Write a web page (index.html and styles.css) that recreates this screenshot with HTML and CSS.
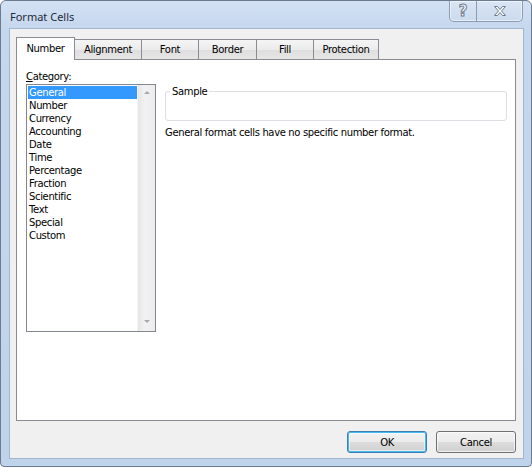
FILE: index.html
```html
<!DOCTYPE html>
<html lang="en">
<head>
    <meta charset="UTF-8">
    <title>Format Cells</title>
    <link rel="stylesheet" href="styles.css">
</head>
<body>
    <div class="window">
        <div class="titlebar">
            <span class="title">Format Cells</span>
            <div class="caption-buttons">
                <span class="cap-btn help">?</span>
                <span class="cap-btn close">
                    <svg width="14" height="12" viewBox="0 0 14 12">
                        <path d="M1.5 1.5h3l2.5 3 2.5-3h3l-4 4.5 4 4.5h-3l-2.5-3-2.5 3h-3l4-4.5z" fill="#fbfcfe" stroke="#6f7d91" stroke-width="1" stroke-linejoin="round"/>
                    </svg>
                </span>
            </div>
        </div>

        <div class="client">
            <!-- Tabs -->
            <div class="tabs">
                <span class="tab active">Number</span>
                <span class="tab">Alignment</span>
                <span class="tab">Font</span>
                <span class="tab">Border</span>
                <span class="tab">Fill</span>
                <span class="tab">Protection</span>
            </div>

            <!-- Number page -->
            <div class="panel">
                <div class="category">
                    <div class="label"><u>C</u>ategory:</div>
                    <div class="listbox">
                        <ul class="items">
                            <li class="selected">General</li>
                            <li>Number</li>
                            <li>Currency</li>
                            <li>Accounting</li>
                            <li>Date</li>
                            <li>Time</li>
                            <li>Percentage</li>
                            <li>Fraction</li>
                            <li>Scientific</li>
                            <li>Text</li>
                            <li>Special</li>
                            <li>Custom</li>
                        </ul>
                        <div class="scrollbar">
                            <span class="arrow up"></span>
                            <span class="arrow down"></span>
                        </div>
                    </div>
                </div>
                <div class="details">
                    <fieldset class="sample">
                        <legend>Sample</legend>
                        <div class="sample-value"></div>
                    </fieldset>
                    <p class="description">General format cells have no specific number format.</p>
                </div>
            </div>

            <!-- Buttons -->
            <div class="footer">
                <button class="btn default">OK</button>
                <button class="btn">Cancel</button>
            </div>
        </div>
    </div>
</body>
</html>
```

FILE: styles.css
```css
body {
    margin: 0;
    width: 532px;
    height: 467px;
    background-color: #fff;
    font-family: "DejaVu Sans", Tahoma, sans-serif;
    font-size: 10px;
    letter-spacing: -0.35px;
    color: #000;
}
.window {
    box-sizing: border-box;
    width: 532px;
    height: 467px;
    border: 1px solid #6b7b90;
    border-radius: 6px 6px 4px 4px;
    background: linear-gradient(180deg, #d3e1f3 0, #c5d7ee 28px, #bfd3eb 100%);
    padding: 0 7px 7px 8px;
    display: flex;
    flex-direction: column;
}
.titlebar {
    height: 27px;
    display: flex;
    justify-content: space-between;
    align-items: flex-start;
}
.title {
    font-family: "Noto Sans", sans-serif;
    font-size: 11px;
    letter-spacing: 0;
    line-height: 16px;
    margin-top: 8px;
    margin-left: 1px;
    color: #1e2a3a;
}
.caption-buttons {
    display: flex;
    margin-right: 1px;
    border: 1px solid #8a9bb2;
    border-top: none;
    border-radius: 0 0 5px 5px;
    box-shadow: inset 0 0 0 1px rgba(255, 255, 255, 0.55);
    background: linear-gradient(180deg, #d9e5f4, #cbdaee);
}
.cap-btn {
    height: 20px;
    display: flex;
    align-items: center;
    justify-content: center;
}
.help {
    width: 26px;
    border-right: 1px solid #8a9bb2;
    font-family: "DejaVu Sans", sans-serif;
    font-size: 15px;
    font-weight: bold;
    letter-spacing: 0;
    color: #fbfcfe;
    -webkit-text-stroke: 1px #6f7d91;
}
.close {
    width: 45px;
}
.client {
    flex: 1;
    background-color: #f0f0f0;
    border: 1px solid #a3b6cf;
    padding: 8px 7px 0 6px;
    display: flex;
    flex-direction: column;
}
.tabs {
    display: flex;
    align-items: flex-end;
    height: 22px;
    padding-left: 1px;
}
.tab {
    box-sizing: border-box;
    height: 20px;
    line-height: 19px;
    padding: 0 8px;
    border: 1px solid #898c95;
    border-bottom: none;
    margin-right: -1px;
    background: linear-gradient(180deg, #f5f5f5 0, #ebebeb 50%, #dedede 51%, #e6e6e6 100%);
    text-align: center;
}
.tab:nth-child(2) { width: 68px; }
.tab:nth-child(3) { width: 58px; }
.tab:nth-child(4) { width: 59px; }
.tab:nth-child(5) { width: 58px; }
.tab:nth-child(6) { width: 66px; }
.tab.active {
    width: 59px;
    height: 23px;
    line-height: 21px;
    margin-left: -1px;
    margin-bottom: -1px;
    background: #fff;
    position: relative;
    z-index: 1;
}
.panel {
    box-sizing: border-box;
    height: 362px;
    background-color: #fff;
    border: 1px solid #898c95;
    padding: 8px 8px 0 9px;
    display: flex;
    gap: 9px;
}
.category {
    width: 130px;
}
.label {
    line-height: 13px;
    margin-top: 2px;
    height: 14px;
}
.listbox {
    box-sizing: border-box;
    height: 248px;
    border: 1px solid #828790;
    display: flex;
}
.items {
    flex: 1;
    list-style: none;
    margin: 0;
    padding: 1px 0 0 1px;
}
.items li {
    height: 13px;
    line-height: 13px;
    padding-left: 1px;
}
.items li.selected {
    background-color: #3399ff;
    color: #fff;
}
.scrollbar {
    width: 17px;
    background: linear-gradient(90deg, #e6e6e6, #f2f2f2 40%, #ececec);
    border-left: 1px solid #f4f4f4;
    display: flex;
    flex-direction: column;
    justify-content: space-between;
    align-items: center;
    padding: 6px 0 8px;
}
.arrow {
    width: 0;
    height: 0;
    border-left: 3px solid transparent;
    border-right: 3px solid transparent;
}
.arrow.up {
    border-bottom: 3px solid #a8a8a8;
}
.arrow.down {
    border-top: 3px solid #a8a8a8;
}
.details {
    flex: 1;
}
.sample {
    margin: 17px 0 0 0;
    padding: 0 0 0 4px;
    width: 342px;
    box-sizing: border-box;
    border: 1px solid #dcdfe3;
    border-radius: 3px;
}
.sample legend {
    padding: 0 2px;
    line-height: 13px;
}
.sample-value {
    height: 22px;
}
.description {
    margin: 5px 0 0;
    line-height: 13px;
}
.footer {
    display: flex;
    justify-content: flex-end;
    gap: 9px;
    padding-top: 10px;
}
.btn {
    width: 80px;
    height: 22px;
    padding: 0;
    font-family: "DejaVu Sans", Tahoma, sans-serif;
    font-size: 10px;
    letter-spacing: -0.35px;
    color: #000;
    border: 1px solid #707070;
    border-radius: 3px;
    background: linear-gradient(180deg, #f2f2f2 0, #ebebeb 50%, #dddddd 51%, #cfcfcf 100%);
    box-shadow: inset 0 0 0 1px rgba(255, 255, 255, 0.7);
}
.btn.default {
    border-color: #3c7fb1;
    box-shadow: inset 0 0 0 1px #48b9f0, inset 0 0 0 2px rgba(255, 255, 255, 0.5);
}
```
